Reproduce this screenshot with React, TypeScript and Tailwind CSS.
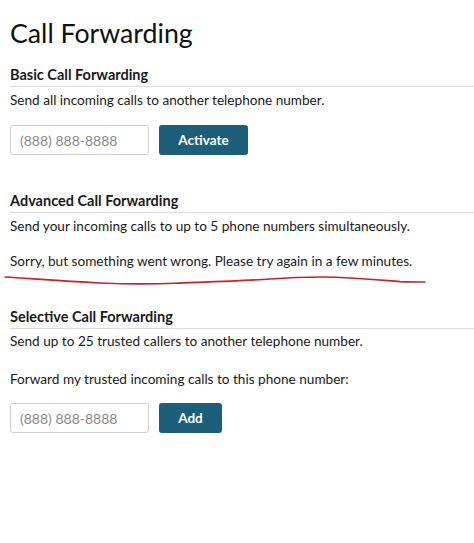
import React from "react";

function Heading({ children }: { children: React.ReactNode }) {
  return (
    <div className="border-b border-[#dcdcdc] pb-[1px] text-[14.5px] font-bold leading-[20px] text-[#1a1a1a]">
      {children}
    </div>
  );
}

function PhoneRow({ label, btnW }: { label: string; btnW: string }) {
  return (
    <div className="flex items-center gap-[10px]">
      <input
        placeholder="(888) 888-8888"
        className="h-[30px] w-[139px] rounded-[3px] border border-[#cfcfcf] bg-white px-[9px] text-[14px] text-[#333] placeholder:text-[#8a8a8a] outline-none"
      />
      <button className={`h-[30px] ${btnW} rounded-[3px] bg-[#1d5f7b] text-[13.5px] font-bold text-white`}>
        {label}
      </button>
    </div>
  );
}

export default function App() {
  return (
    <div
      className="min-h-[543px] w-[474px] bg-white pl-[10px] pt-[15px] text-[#1a1a1a]"
      style={{ fontFamily: 'Lato, "Open Sans", sans-serif' }}
    >
      <h1 className="text-[26.7px] font-normal leading-[36px] text-[#111]">Call Forwarding</h1>

      <div className="mt-[14px]">
        <Heading>Basic Call Forwarding</Heading>
        <p className="mt-[3px] text-[13.6px] leading-[20px]">Send all incoming calls to another telephone number.</p>
        <div className="mt-[15px]">
          <PhoneRow label="Activate" btnW="w-[89px]" />
        </div>
      </div>

      <div className="mt-[36px]">
        <Heading>Advanced Call Forwarding</Heading>
        <p className="mt-[3px] text-[13.6px] leading-[20px]">
          Send your incoming calls to up to 5 phone numbers simultaneously.
        </p>
        <p className="mt-[15px] text-[13.6px] leading-[20px]">
          Sorry, but something went wrong. Please try again in a few minutes.
        </p>
        <svg width="474" height="16" viewBox="0 0 474 16" className="-ml-[10px] block">
          <path
            d="M 5 6 C 30 7.5, 60 10, 100 12 C 125 13, 150 13.2, 175 12.2 C 205 11, 240 10, 270 8 C 290 6.5, 315 5.8, 335 6.2 C 360 7, 380 9, 400 10.6 C 410 11, 418 11, 425 11"
            fill="none"
            stroke="#cc1f2a"
            strokeWidth="1.6"
            strokeLinecap="round"
          />
        </svg>
      </div>

      <div className="mt-[20px]">
        <Heading>Selective Call Forwarding</Heading>
        <p className="mt-[2px] text-[13.6px] leading-[20px]">Send up to 25 trusted callers to another telephone number.</p>
        <p className="mt-[18px] text-[13.6px] leading-[20px]">Forward my trusted incoming calls to this phone number:</p>
        <div className="mt-[14px]">
          <PhoneRow label="Add" btnW="w-[63px]" />
        </div>
      </div>
    </div>
  );
}
